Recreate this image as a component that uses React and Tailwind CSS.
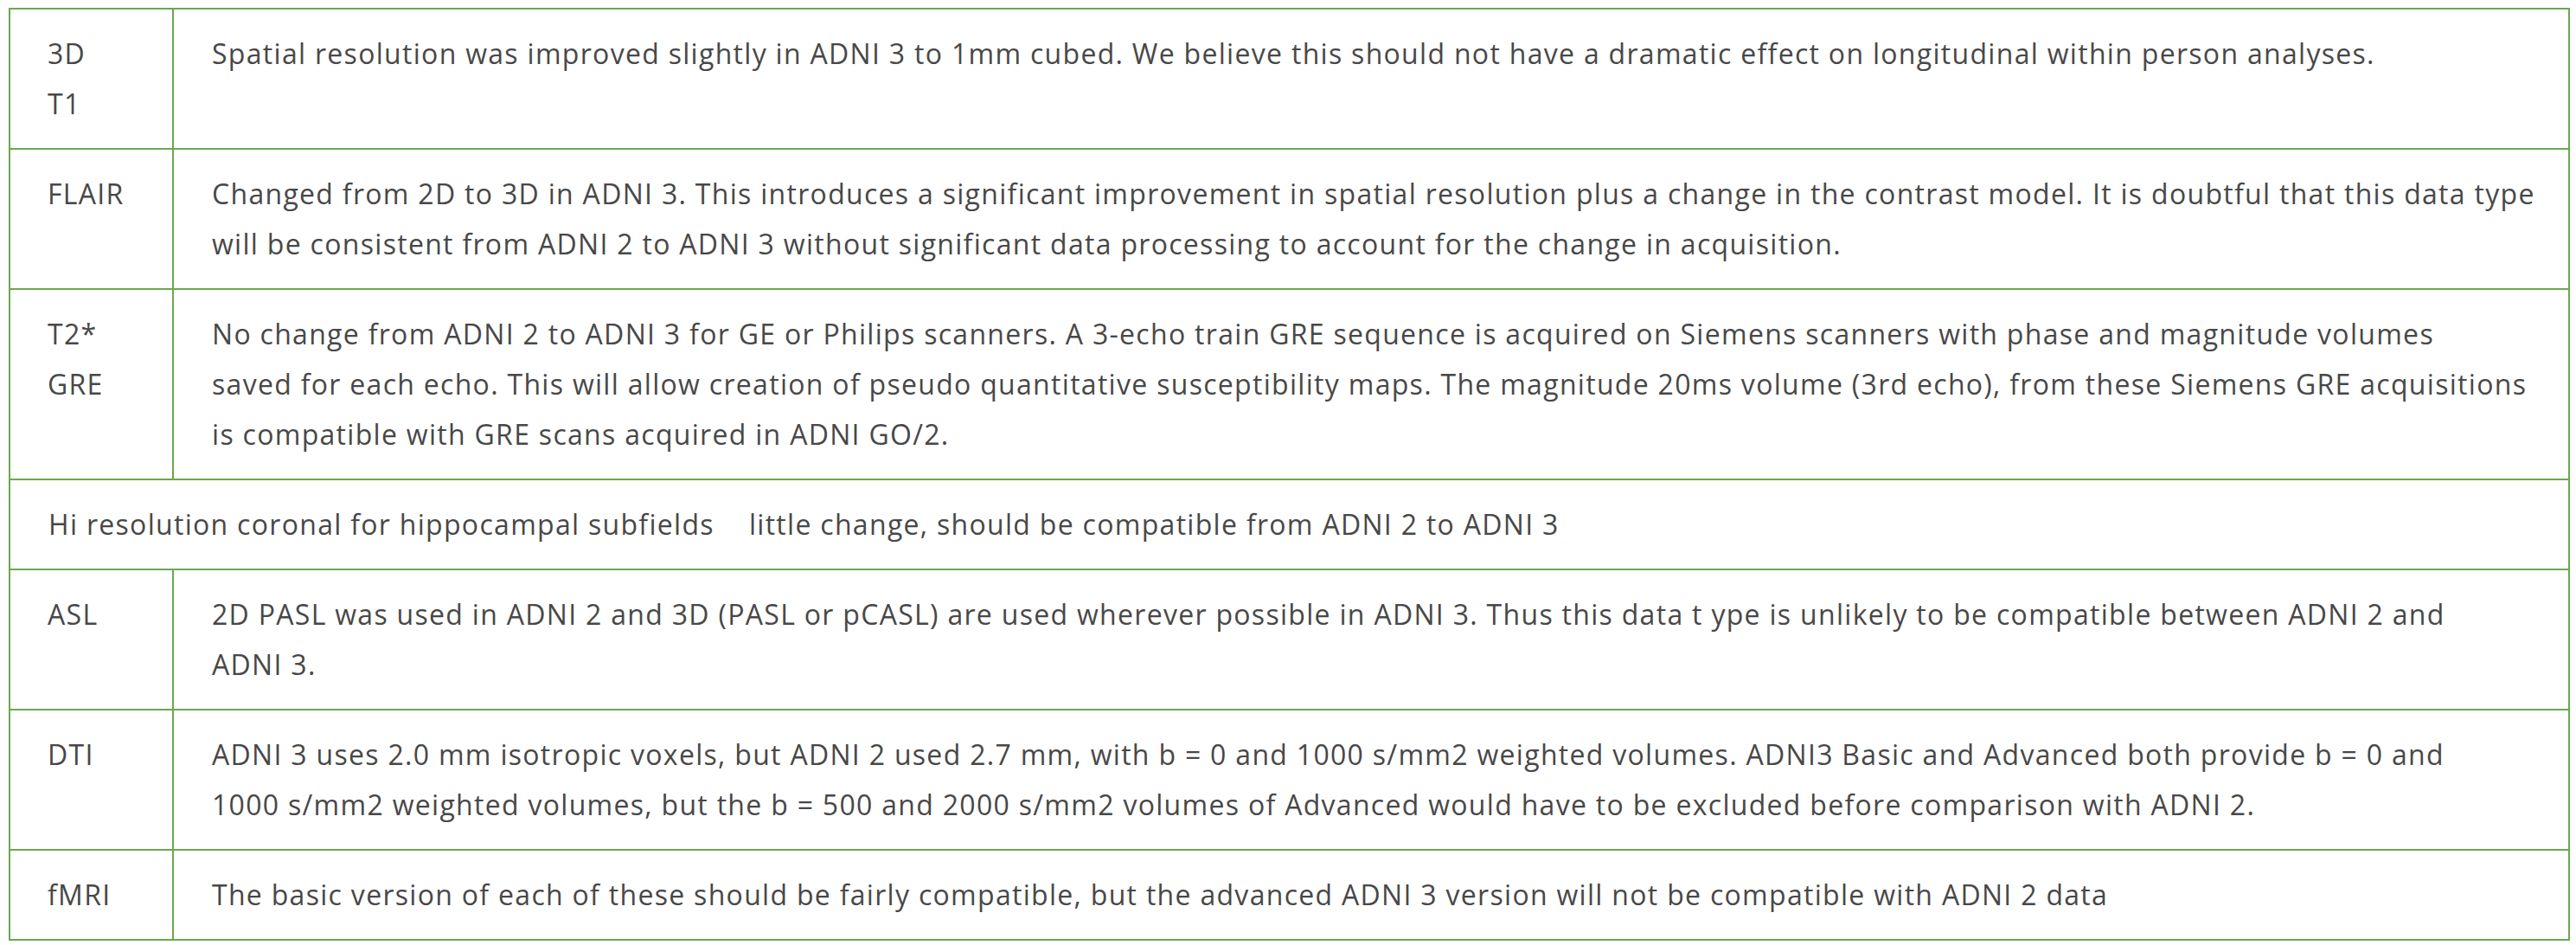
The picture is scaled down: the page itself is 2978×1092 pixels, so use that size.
export default function App() {
  const rows = [
    { label: ["3D", "T1"], lines: ["Spatial resolution was improved slightly in ADNI 3 to 1mm cubed. We believe this should not have a dramatic effect on longitudinal within person analyses."] },
    { label: ["FLAIR"], lines: ["Changed from 2D to 3D in ADNI 3. This introduces a significant improvement in spatial resolution plus a change in the contrast model. It is doubtful that this data type", "will be consistent from ADNI 2 to ADNI 3 without significant data processing to account for the change in acquisition."] },
    { label: ["T2*", "GRE"], lines: ["No change from ADNI 2 to ADNI 3 for GE or Philips scanners. A 3-echo train GRE sequence is acquired on Siemens scanners with phase and magnitude volumes", "saved for each echo. This will allow creation of pseudo quantitative susceptibility maps. The magnitude 20ms volume (3rd echo), from these Siemens GRE acquisitions", "is compatible with GRE scans acquired in ADNI GO/2."] },
    { full: true },
    { label: ["ASL"], lines: ["2D PASL was used in ADNI 2 and 3D (PASL or pCASL) are used wherever possible in ADNI 3. Thus this data t ype is unlikely to be compatible between ADNI 2 and", "ADNI 3."] },
    { label: ["DTI"], lines: ["ADNI 3 uses 2.0 mm isotropic voxels, but ADNI 2 used 2.7 mm, with b = 0 and 1000 s/mm2 weighted volumes. ADNI3 Basic and Advanced both provide b = 0 and", "1000 s/mm2 weighted volumes, but the b = 500 and 2000 s/mm2 volumes of Advanced would have to be excluded before comparison with ADNI 2."] },
    { label: ["fMRI"], lines: ["The basic version of each of these should be fairly compatible, but the advanced ADNI 3 version will not be compatible with ADNI 2 data"] },
  ];
  return (
    <div className="w-[2978px] h-[1092px] bg-white pt-[9px] pl-[10px]" style={{ fontFamily: "'Open Sans', sans-serif" }}>
      <div className="w-[2961px] border-2 border-[#6aa84f] text-[32px] leading-[58px] tracking-[1.3px] text-[#484848]">
        {rows.map((r, i) =>
          r.full ? (
            <div key={i} className="border-t-2 border-[#6aa84f] py-[22px] pl-[44px] whitespace-nowrap">
              Hi resolution coronal for hippocampal subfields<span className="inline-block w-[40px]"></span>little change, should be compatible from ADNI 2 to ADNI 3
            </div>
          ) : (
            <div key={i} className={"flex " + (i > 0 ? "border-t-2 border-[#6aa84f]" : "")}>
              <div className="w-[189px] shrink-0 border-r-2 border-[#6aa84f] py-[22px] pl-[43px]">
                {r.label.map((l, j) => (
                  <div key={j}>{l}</div>
                ))}
              </div>
              <div className="flex-1 py-[22px] pl-[44px] pr-[10px] whitespace-nowrap">
                {r.lines.map((l, j) => (
                  <div key={j}>{l}</div>
                ))}
              </div>
            </div>
          )
        )}
      </div>
    </div>
  );
}
